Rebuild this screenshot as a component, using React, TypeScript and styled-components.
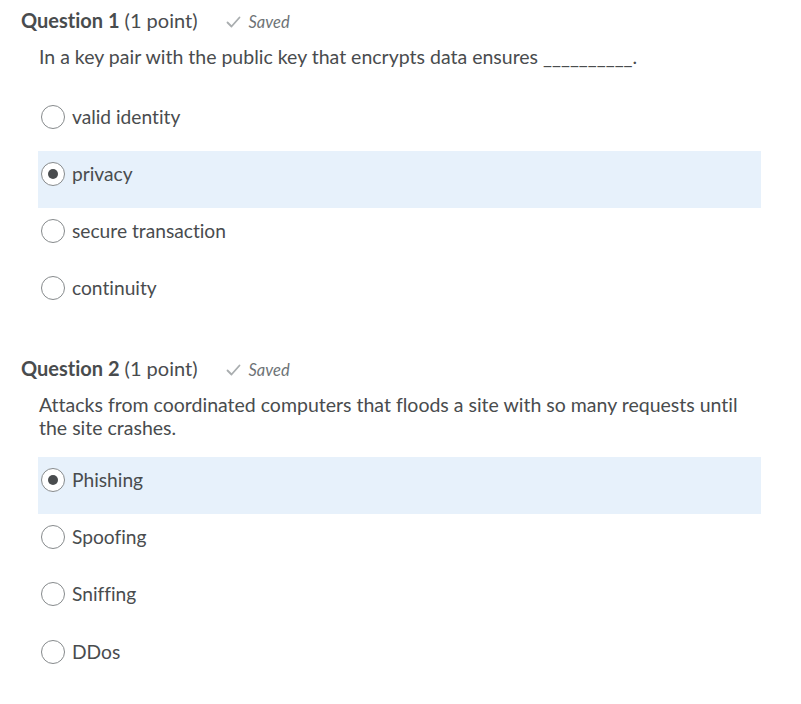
import React from "react";
import styled, { createGlobalStyle } from "styled-components";

const Global = createGlobalStyle`
  html, body { margin: 0; padding: 0; background: #fff; }
  body {
    font-family: Lato, "Open Sans", sans-serif;
    color: #494c4e;
    font-variant-ligatures: none;
  }
`;

const Page = styled.div`
  width: 801px;
  padding: 7px 40px 0 21px;
  box-sizing: border-box;
`;

const Question = styled.section`
  display: flex;
  flex-direction: column;
  margin-bottom: 32px;
`;

const Header = styled.div`
  display: flex;
  align-items: baseline;
  height: 26px;
  font-size: 20px;
  line-height: 26px;
`;

const Title = styled.span`
  font-weight: 700;
`;

const Points = styled.span`
  font-weight: 400;
  margin-left: 5px;
`;

const Saved = styled.span`
  display: inline-flex;
  align-items: center;
  margin-left: 28px;
  font-size: 16.5px;
  font-style: italic;
  color: #6e7376;
  gap: 8px;
`;

const Prompt = styled.p<{ $extra?: boolean }>`
  margin: 12px 0 ${(p) => (p.$extra ? "25.5px" : "18px")} 18px;
  font-size: 19.5px;
  line-height: 23px;
`;

const Options = styled.div`
  display: flex;
  flex-direction: column;
  margin-left: 17px;
`;

const Option = styled.label<{ $selected?: boolean }>`
  display: flex;
  align-items: flex-start;
  box-sizing: border-box;
  height: 57.33px;
  padding: 11px 0 0 3px;
  background: ${(p) => (p.$selected ? "#e7f1fb" : "transparent")};
  font-size: 19.2px;
  line-height: 24px;
  cursor: pointer;
`;

const Radio = styled.span<{ $checked?: boolean }>`
  width: 24px;
  height: 24px;
  box-sizing: border-box;
  border-radius: 50%;
  border: 1px solid #868a8c;
  background: #fff;
  display: inline-flex;
  align-items: center;
  justify-content: center;
  margin-right: 7px;
  flex: none;
  &::after {
    content: "";
    width: 10px;
    height: 10px;
    border-radius: 50%;
    background: ${(p) => (p.$checked ? "#494c4e" : "transparent")};
  }
`;

const Check = () => (
  <svg width="15" height="12" viewBox="0 0 15 12" fill="none">
    <path d="M1.5 6.5 L5.5 10.5 L13.5 1.5" stroke="#a9adaf" strokeWidth="1.8" strokeLinecap="round" strokeLinejoin="round" />
  </svg>
);

type Q = { n: number; prompt: string; options: string[]; selected: number; extra?: boolean };

const questions: Q[] = [
  {
    n: 1,
    prompt: "In a key pair with the public key that encrypts data ensures __________.",
    options: ["valid identity", "privacy", "secure transaction", "continuity"],
    selected: 1,
    extra: true,
  },
  {
    n: 2,
    prompt:
      "Attacks from coordinated computers that floods a site with so many requests until the site crashes.",
    options: ["Phishing", "Spoofing", "Sniffing", "DDos"],
    selected: 0,
  },
];

export default function App() {
  return (
    <Page>
      <Global />
      {questions.map((q) => (
        <Question key={q.n}>
          <Header>
            <Title>Question {q.n}</Title>
            <Points>(1 point)</Points>
            <Saved>
              <Check />
              Saved
            </Saved>
          </Header>
          <Prompt $extra={q.extra}>{q.prompt}</Prompt>
          <Options>
            {q.options.map((o, i) => (
              <Option key={o} $selected={i === q.selected}>
                <Radio $checked={i === q.selected} />
                {o}
              </Option>
            ))}
          </Options>
        </Question>
      ))}
    </Page>
  );
}
